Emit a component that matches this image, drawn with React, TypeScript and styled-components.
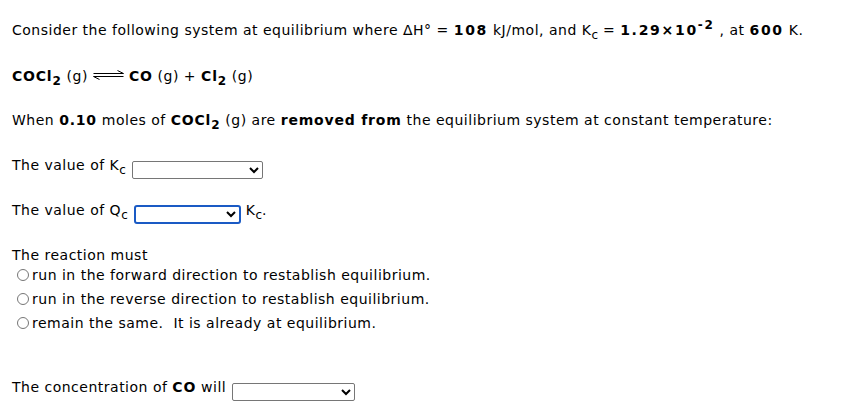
import React from 'react';
import styled, { createGlobalStyle } from 'styled-components';

const GlobalStyle = createGlobalStyle`
  body {
    margin: 0;
    background: #ffffff;
    color: #000000;
    font-family: Verdana, "DejaVu Sans", sans-serif;
    font-size: 14px;
    letter-spacing: 0.5px;
  }
`;

const Page = styled.div`
  padding: 20px 12px 20px 12px;
`;

const Line = styled.div<{ $gap?: number }>`
  height: 20px;
  line-height: 20px;
  margin-top: ${({ $gap }) => $gap ?? 0}px;
  white-space: pre;
`;

const Bold = styled.b<{ $num?: boolean }>`
  font-weight: bold;
  letter-spacing: ${({ $num }) => ($num ? 1.7 : 0.8)}px;
`;

const Sub = styled.sub`
  font-size: 12px;
  vertical-align: -4px;
  line-height: 0;
  letter-spacing: 0;
`;

const Sup = styled.sup`
  font-size: 12px;
  vertical-align: 6px;
  line-height: 0;
`;

const EqArrow = styled.svg`
  display: inline-block;
  width: 31px;
  height: 10px;
  margin: 0 5px 0 5px;
  vertical-align: 1px;
`;

const Select = styled.select<{ $width: number; $focused?: boolean }>`
  width: ${({ $width }) => $width}px;
  height: ${({ $focused }) => ($focused ? 19 : 18)}px;
  margin: 0 0 0 6px;
  padding: 0;
  vertical-align: -4px;
  box-sizing: border-box;
  border: ${({ $focused }) => ($focused ? '2px solid #1a5ac4' : '1px solid #767676')};
  border-radius: ${({ $focused }) => ($focused ? 3 : 2)}px;
  background: #fff;
  font-size: 12px;
  line-height: 14px;
  outline: none;
`;

const Options = styled.div`
  display: flex;
  flex-direction: column;
  gap: 4px;
  padding-left: 5px;
`;

const OptionRow = styled.label`
  display: flex;
  align-items: center;
  height: 20px;
  white-space: pre;
`;

const Radio = styled.span`
  display: inline-block;
  flex: none;
  width: 12px;
  height: 12px;
  border: 1px solid #767676;
  border-radius: 50%;
  margin-right: 3px;
  box-sizing: border-box;
`;

const ArrowSvg = () => (
  <EqArrow viewBox="0 0 31 10">
    <path d="M0.5 3.5 H30.5 L24.5 0.5" fill="none" stroke="#000" strokeWidth="1" />
    <path d="M30.5 6.5 H0.5 L6.5 9.5" fill="none" stroke="#000" strokeWidth="1" />
  </EqArrow>
);

export default function App() {
  return (
    <>
      <GlobalStyle />
      <Page>
        <Line>
          Consider the following system at equilibrium where &Delta;H&deg; = <Bold $num>108</Bold> kJ/mol,
          and K<Sub>c</Sub> = <Bold $num>1.29&times;10</Bold>
          <Sup>
            <Bold $num>-2</Bold>
          </Sup>{' '}
          , at <Bold $num>600</Bold> K.
        </Line>
        <Line $gap={26}>
          <Bold>COCl</Bold>
          <Sub>
            <Bold>2</Bold>
          </Sub>{' '}
          (g)
          <ArrowSvg />
          <Bold>CO</Bold> (g) + <Bold>Cl</Bold>
          <Sub>
            <Bold>2</Bold>
          </Sub>{' '}
          (g)
        </Line>
        <Line $gap={24}>
          When <Bold>0.10</Bold> moles of <Bold>COCl</Bold>
          <Sub>
            <Bold>2</Bold>
          </Sub>{' '}
          (g) are <Bold>removed from</Bold> the equilibrium system at constant temperature:
        </Line>
        <Line $gap={25}>
          The value of K<Sub>c</Sub>
          <Select $width={131}>
            <option></option>
          </Select>
        </Line>
        <Line $gap={25}>
          The value of Q<Sub>c</Sub>
          <Select $width={107} $focused>
            <option></option>
          </Select>{' '}
          K<Sub>c</Sub>.
        </Line>
        <Line $gap={25}>The reaction must</Line>
        <Options>
          <OptionRow>
            <Radio />
            run in the forward direction to restablish equilibrium.
          </OptionRow>
          <OptionRow>
            <Radio />
            run in the reverse direction to restablish equilibrium.
          </OptionRow>
          <OptionRow>
            <Radio />
            remain the same.  It is already at equilibrium.
          </OptionRow>
        </Options>
        <Line $gap={44}>
          The concentration of <Bold>CO</Bold> will
          <Select $width={123}>
            <option></option>
          </Select>
        </Line>
      </Page>
    </>
  );
}
